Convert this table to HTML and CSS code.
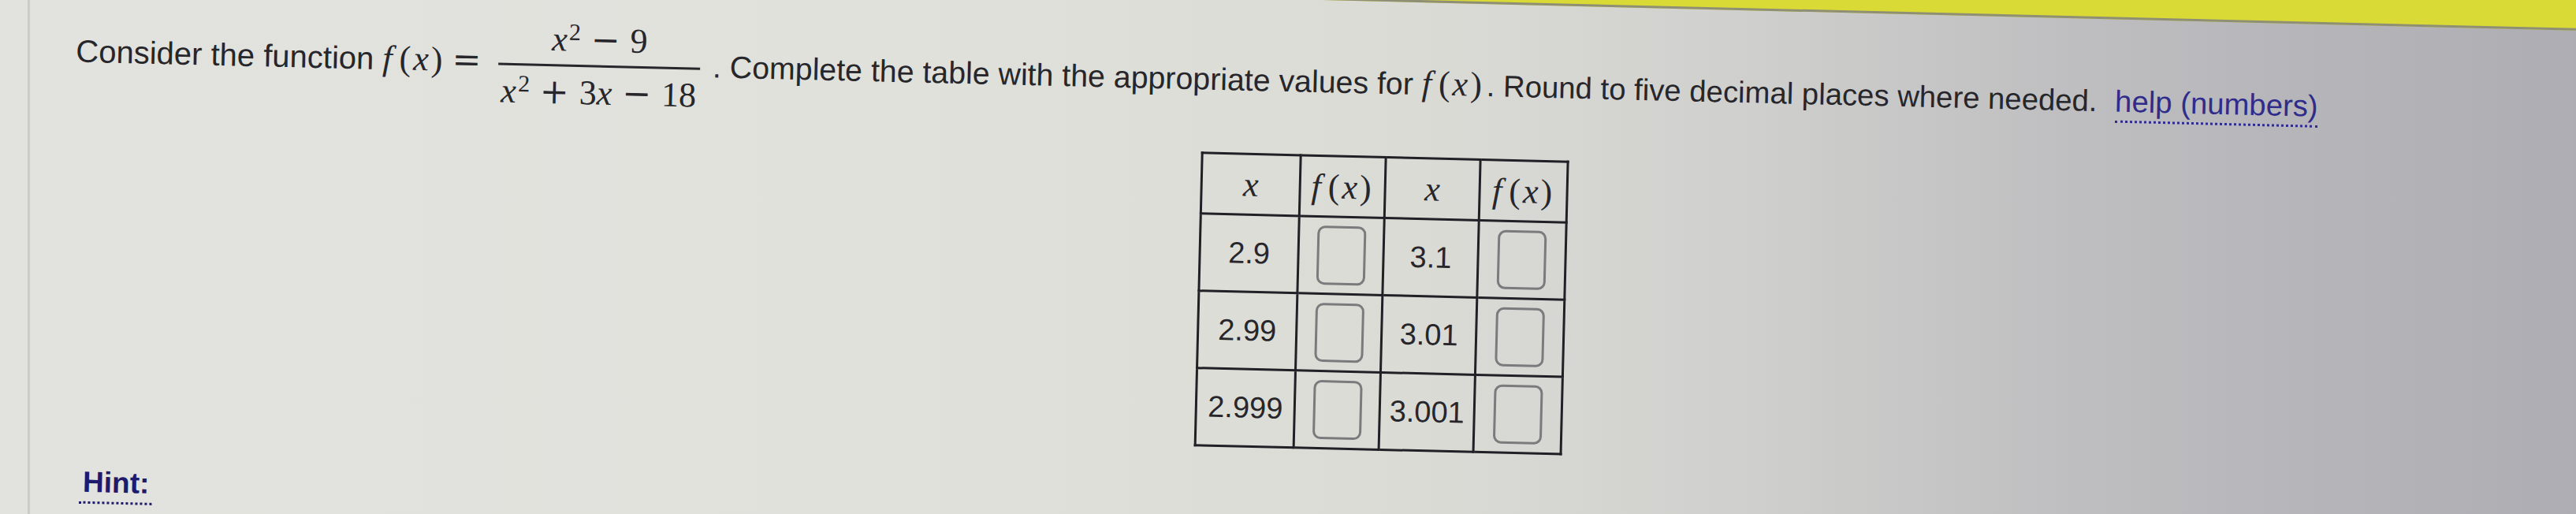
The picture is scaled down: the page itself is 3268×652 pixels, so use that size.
FILE: index.html
```html
<!DOCTYPE html>
<html lang="en">
<head>
<meta charset="utf-8">
<title>Consider the function</title>
<link rel="stylesheet" href="styles.css">
</head>
<body>
<div class="page">
  <div class="topbar"></div>
  <div class="content">
    <p class="question"><span class="seg-a">Consider the function </span><span class="math"><span class="mi f">f</span><span class="paren">(</span><span class="mi">x</span><span class="paren">)</span><span class="rel">=</span><span class="frac"><span class="num"><span class="mi">x</span><span class="sup">2</span><span class="op">−</span>9</span><span class="bar"></span><span class="den"><span class="mi">x</span><span class="sup">2</span><span class="op">+</span>3<span class="mi">x</span><span class="op">−</span>18</span></span></span><span class="seg-b">. Complete the table with the appropriate values for </span><span class="math math-end"><span class="mi f">f</span><span class="paren">(</span><span class="mi">x</span><span class="paren">)</span></span><span class="seg-c">. Round to five decimal places where needed. <span class="help">help (numbers)</span></span></p>

    <div class="table-wrap">
      <table class="values">
        <colgroup>
          <col class="c1"><col class="c2"><col class="c3"><col class="c4">
        </colgroup>
        <tr class="head">
          <th><span class="math"><span class="mi">x</span></span></th>
          <th><span class="math"><span class="mi f">f</span><span class="paren">(</span><span class="mi">x</span><span class="paren">)</span></span></th>
          <th><span class="math"><span class="mi">x</span></span></th>
          <th><span class="math"><span class="mi f">f</span><span class="paren">(</span><span class="mi">x</span><span class="paren">)</span></span></th>
        </tr>
        <tr class="row">
          <td>2.9</td><td><span class="box"></span></td>
          <td>3.1</td><td><span class="box"></span></td>
        </tr>
        <tr class="row">
          <td>2.99</td><td><span class="box"></span></td>
          <td>3.01</td><td><span class="box"></span></td>
        </tr>
        <tr class="row">
          <td>2.999</td><td><span class="box"></span></td>
          <td>3.001</td><td><span class="box"></span></td>
        </tr>
      </table>
    </div>

    <div class="hint"><span class="hint-link">Hint:</span></div>
  </div>
</div>
</body>
</html>
```

FILE: styles.css
```css
html, body {
  margin: 0;
  height: 100%;
  overflow: hidden;
}

body {
  font-family: "Liberation Sans", Arial, sans-serif;
  color: #26262b;
  background:
    linear-gradient(90deg, transparent 35px, #cbccc8 35px, #cbccc8 38px, transparent 38px),
    linear-gradient(90deg, #e2e3de 0%, #e0e1db 35%, #dbdbd6 55%, #cfcfcd 68%, #bfbfc1 80%, #b3b3b8 92%, #adadb3 100%);
}

.page {
  width: 3600px;
  transform-origin: 0 0;
  transform: rotate(1.4deg) translateY(-162px);
}

.topbar {
  height: 118px;
  background: #dada36;
  border-bottom: 3px solid #8f8f76;
}

.content {
  padding: 48px 0 0 98px;
}

.question {
  margin: 0;
  font-size: 40px;
  line-height: 1.15;
  white-space: nowrap;
}

.seg-b {
  font-size: 39.3px;
}

.seg-c {
  font-size: 38.3px;
}

.math {
  font-family: "Liberation Serif", "Times New Roman", serif;
  font-size: 44px;
  white-space: nowrap;
}

.math-end {
  margin-right: 3px;
}

.mi {
  font-style: italic;
}

.f {
  padding-right: 6px;
}

.paren {
  padding: 0 3px;
}

.rel {
  font-family: "DejaVu Serif", serif;
  margin: 0 22px 0 9px;
}

.op {
  font-family: "DejaVu Serif", serif;
  margin: 0 13px;
}

.frac {
  display: inline-flex;
  flex-direction: column;
  align-items: center;
  vertical-align: middle;
  margin: 0 16px 0 0;
}

.num {
  line-height: 50px;
  padding: 0 4px 6px;
}

.bar {
  align-self: stretch;
  height: 3px;
  background: #26262b;
}

.den {
  line-height: 50px;
  padding: 7px 4px 0;
}

.sup {
  font-size: 30px;
  line-height: 0;
  vertical-align: 14px;
  padding-left: 2px;
}

.help {
  color: #2f2c8c;
  border-bottom: 3px dotted #2f2c8c;
  padding-bottom: 3px;
  margin-left: 12px;
}

.table-wrap {
  margin: 30px 0 0 1430px;
}

.values {
  border-collapse: collapse;
  table-layout: fixed;
  font-size: 38px;
}

.c1 { width: 125px; }
.c2 { width: 108px; }
.c3 { width: 120px; }
.c4 { width: 111px; }

.values th,
.values td {
  border: 3px solid #202026;
  padding: 0;
  text-align: center;
  vertical-align: middle;
  font-weight: normal;
}

.head th {
  height: 74px;
}

.row td {
  height: 95px;
}

.box {
  display: inline-block;
  width: 56px;
  height: 69px;
  border: 3px solid #7b7b7e;
  border-radius: 10px;
  vertical-align: middle;
}

.hint {
  margin: 58px 0 0 18px;
}

.hint-link {
  display: inline-block;
  font-size: 37px;
  font-weight: bold;
  line-height: 44px;
  color: #1d1b6e;
  padding: 0 4px 2px;
  border-bottom: 3px dotted #1d1b6e;
}
```
